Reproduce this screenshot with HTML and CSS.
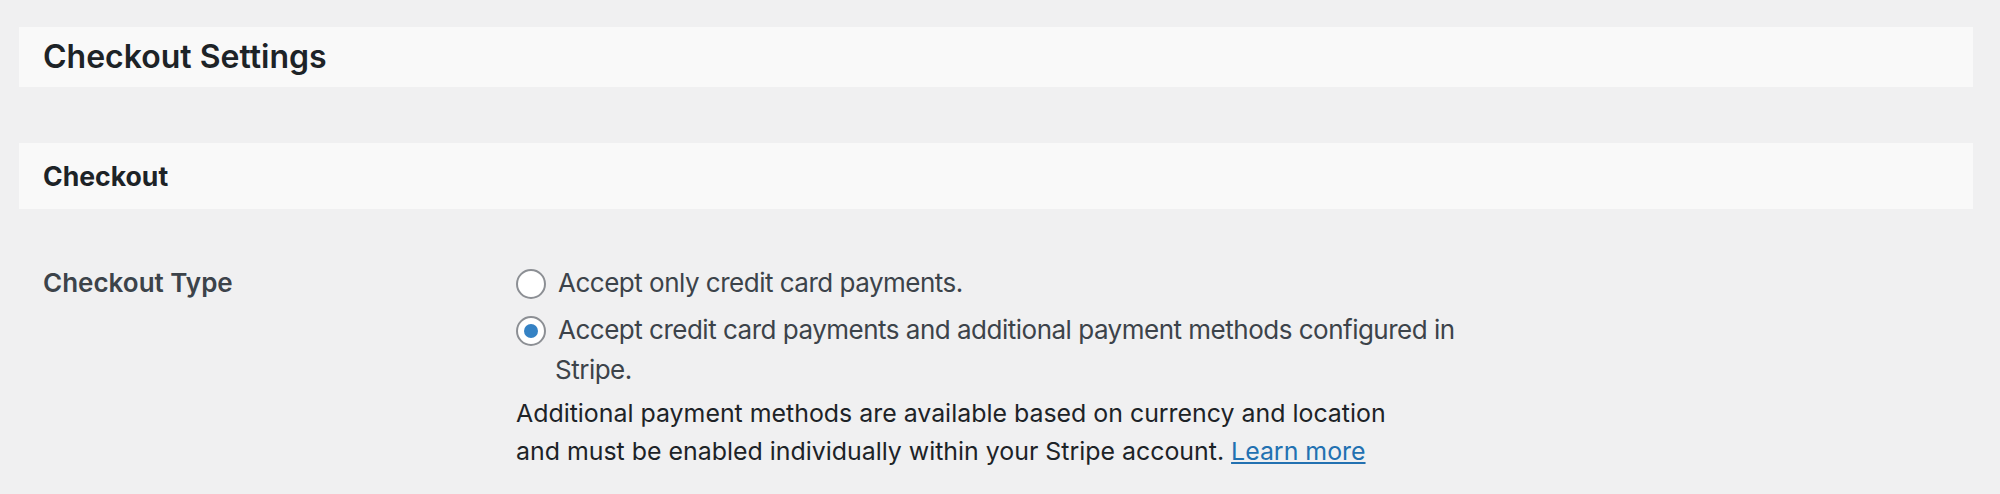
FILE: index.html
```html
<!DOCTYPE html>
<html lang="en">
<head>
    <meta charset="UTF-8">
    <meta name="viewport" content="width=device-width, initial-scale=1.0">
    <title>Checkout Settings</title>
    <link rel="stylesheet" href="styles.css">
</head>
<body>

<div class="wrap">
    <div class="panel panel-title">
        <h1>Checkout Settings</h1>
    </div>

    <div class="panel panel-section">
        <h2>Checkout</h2>
    </div>

    <form class="form-table" name="checkoutForm">
        <div class="form-row">
            <div class="field-label">Checkout Type</div>
            <div class="field">
                <label class="choice"><input type="radio" name="checkoutType" value="card">Accept only credit card payments.</label>
                <label class="choice"><input type="radio" name="checkoutType" value="all" checked>Accept credit card payments and additional payment methods configured in Stripe.</label>
                <p class="description">Additional payment methods are available based on currency and location and must be enabled individually within your Stripe account. <a href="#">Learn more</a></p>
            </div>
        </div>
    </form>
</div>

</body>
</html>
```

FILE: styles.css
```css
/* Tata letak halaman pengaturan */
body {
    font-family: Inter, "Liberation Sans", sans-serif;
    background-color: #f0f0f1;
    color: #3c434a;
    margin: 0;
}
.wrap {
    padding: 27px 27px 0 19px;
}
.panel {
    background-color: #f9f9f9;
    padding: 8px 24px;
}
.panel h1 {
    margin: 0;
    font-size: 32px;
    line-height: 44px;
    font-weight: 600;
    color: #1d2327;
}
.panel-section {
    margin-top: 56px;
    padding: 15px 24px;
}
.panel h2 {
    margin: 0;
    font-size: 26.6px;
    line-height: 36px;
    font-weight: 700;
    color: #1d2327;
}
.form-table {
    margin-top: 54px;
    padding-left: 24px;
}
.form-row {
    display: flex;
}
.field-label {
    width: 473px;
    flex-shrink: 0;
    font-size: 26px;
    line-height: 40px;
    font-weight: 600;
    color: #3c434a;
}
.field {
    max-width: 950px;
}
.choice {
    display: block;
    font-size: 26px;
    line-height: 40px;
    letter-spacing: -0.5px;
    padding-left: 39px;
    text-indent: -39px;
    margin-bottom: 7px;
    color: #3c434a;
}
.choice:last-of-type {
    margin-bottom: 0;
}
.choice input[type="radio"] {
    appearance: none;
    -webkit-appearance: none;
    width: 30px;
    height: 30px;
    margin: 0 12px 0 0;
    border: 2px solid #8c8f94;
    border-radius: 50%;
    background-color: #fff;
    vertical-align: middle;
    box-sizing: border-box;
    position: relative;
    top: -1px;
}
.choice input[type="radio"]:checked::before {
    content: "";
    position: absolute;
    left: 6px;
    top: 6px;
    width: 14px;
    height: 14px;
    border-radius: 50%;
    background-color: #3582c4;
}
.description {
    max-width: 890px;
    margin: 4px 0 0;
    font-size: 24.9px;
    line-height: 38px;
    color: #1d2327;
}
.description a {
    color: #2271b1;
}
```
